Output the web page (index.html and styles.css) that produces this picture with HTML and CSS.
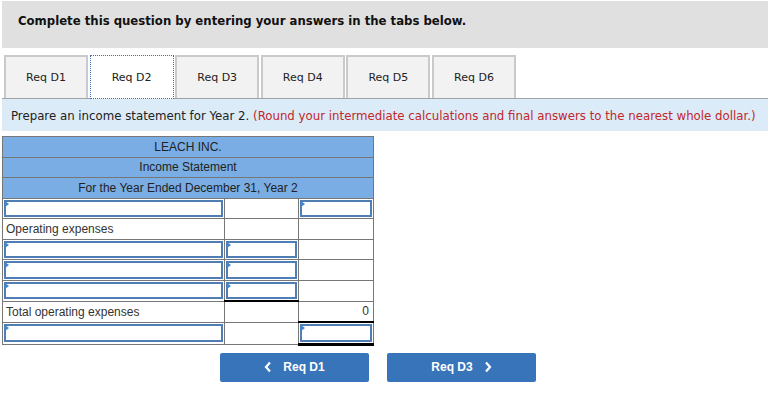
FILE: index.html
```html
<!DOCTYPE html>
<html>
<head>
<meta charset="utf-8">
<link rel="stylesheet" href="styles.css">
</head>
<body>
<div class="page">
  <div class="header"><p>Complete this question by entering your answers in the tabs below.</p></div>
  <div class="tabs">
    <div class="tab">Req D1</div>
    <div class="tab active">Req D2</div>
    <div class="tab">Req D3</div>
    <div class="tab">Req D4</div>
    <div class="tab">Req D5</div>
    <div class="tab">Req D6</div>
  </div>
  <div class="instr">Prepare an income statement for Year 2. <span class="red">(Round your intermediate calculations and final answers to the nearest whole dollar.)</span></div>
  <table class="stmt">
    <colgroup><col class="c1"><col class="c2"><col class="c3"></colgroup>
    <tr class="hd"><td colspan="3">LEACH INC.</td></tr>
    <tr class="hd"><td colspan="3">Income Statement</td></tr>
    <tr class="hd"><td colspan="3">For the Year Ended December 31, Year 2</td></tr>
    <tr><td class="ic"><div class="inp"></div></td><td></td><td class="ic"><div class="inp"></div></td></tr>
    <tr><td class="lbl">Operating expenses</td><td></td><td></td></tr>
    <tr><td class="ic"><div class="inp"></div></td><td class="ic"><div class="inp"></div></td><td></td></tr>
    <tr><td class="ic"><div class="inp"></div></td><td class="ic"><div class="inp"></div></td><td></td></tr>
    <tr><td class="ic"><div class="inp"></div></td><td class="ic ul"><div class="inp"></div></td><td></td></tr>
    <tr><td class="lbl">Total operating expenses</td><td></td><td class="num ul">0</td></tr>
    <tr><td class="ic"><div class="inp"></div></td><td></td><td class="ic dul"><div class="inp"></div></td></tr>
  </table>
  <div class="nav">
    <button class="btn"><svg width="8" height="12" viewBox="0 0 8 12"><path d="M6 1.5 L2 6 L6 10.5" fill="none" stroke="#fff" stroke-width="2.2"/></svg><span>Req D1</span></button>
    <button class="btn next"><span>Req D3</span><svg width="8" height="12" viewBox="0 0 8 12"><path d="M2 1.5 L6 6 L2 10.5" fill="none" stroke="#fff" stroke-width="2.2"/></svg></button>
  </div>
</div>
</body>
</html>
```

FILE: styles.css
```css
html, body { margin: 0; padding: 0; background: #fff; }
.page { padding: 1px 5px 0 2px; font-family: "DejaVu Sans", Verdana, sans-serif; color: #222; }
.header { background: #e0e0e0; height: 47px; box-sizing: border-box; padding: 12px 0 0 16px; }
.header p { margin: 0; font-family: "DejaVu Sans Condensed", "DejaVu Sans", sans-serif; font-stretch: condensed; font-weight: bold; font-size: 13px; color: #111; }
.tabs { display: flex; gap: 1.6px; margin-top: 7px; padding-left: 2px; border-bottom: 1px solid #a3a3a3; height: 43px; }
.tab { width: 84px; box-sizing: border-box; height: 43px; background: #f2f2f2; border: 2px solid #cacaca; border-bottom: none; font-size: 11px; display: flex; align-items: center; justify-content: center; color: #222; }
.tab.active { background: #fff; border: 1px dotted #3b6fb0; height: 44px; position: relative; }
.instr { background: #dcebf8; height: 32px; box-sizing: border-box; padding: 9px 0 0 9px; font-family: "DejaVu Sans Condensed", "DejaVu Sans", sans-serif; font-stretch: condensed; font-size: 13.1px; color: #222; white-space: nowrap; }
.red { color: #c0282d; }
.stmt { border-collapse: collapse; margin-top: 5px; font-family: "Liberation Sans", Arial, sans-serif; font-size: 12px; color: #333; border: 1px solid #777; }
.c1 { width: 222px; } .c2 { width: 74px; } .c3 { width: 75px; }
.stmt td { border: 1px solid #777; height: 19.5px; padding: 0; }
.stmt tr.hd td { background: #79ade4; text-align: center; color: #222; }
.stmt td.lbl { padding-left: 3px; }
.stmt td.num { text-align: right; padding-right: 4px; }
.stmt td.ic { padding: 1px; height: 17.5px; }
.inp { position: relative; height: 17.5px; border: 2px solid #4f7db4; box-sizing: border-box; background: #fff; }
.inp::before { content: ""; position: absolute; left: -1px; top: -1px; border-top: 3px solid transparent; border-bottom: 3px solid transparent; border-left: 4px solid #3f86d6; }
.stmt td.ul { border-bottom: 2px solid #000; }
.stmt td.dul { border-bottom: 3px solid #000; }
.nav { display: flex; gap: 18px; padding-left: 218px; margin-top: 7px; }
.btn { width: 149px; height: 29px; background: #3874b9; border: none; border-radius: 2px; color: #fff; font-family: "Liberation Sans", Arial, sans-serif; font-weight: bold; font-size: 12px; display: flex; align-items: center; justify-content: center; gap: 11px; padding: 0; }
```
